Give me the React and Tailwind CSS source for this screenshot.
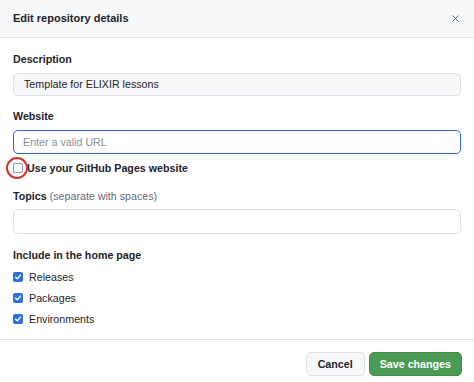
import { X } from 'lucide-react'

const Check = () => (
  <span className="flex h-[10px] w-[10px] items-center justify-center rounded-[2px] bg-[#2f6fe0]">
    <svg viewBox="0 0 10 10" className="h-[8px] w-[8px]">
      <path d="M2 5.2 L4.2 7.3 L8 2.6" fill="none" stroke="white" strokeWidth="1.8" strokeLinecap="round" strokeLinejoin="round" />
    </svg>
  </span>
)

const App = () => {
  const homeItems = ['Releases', 'Packages', 'Environments']

  return (
    <div className="h-[382px] w-[474px] bg-white text-[10.7px] text-[#1f2328]" style={{ fontFamily: '"Liberation Sans", Arial, sans-serif' }}>
      {/* Header */}
      <div className="flex h-[38px] items-center justify-between border-b border-[#e4e7ea] bg-[#f6f8fa] pl-[13px] pr-[13px]">
        <h1 className="text-[11px] font-bold">Edit repository details</h1>
        <X className="h-[11px] w-[11px] text-[#4d5660]" strokeWidth={2} />
      </div>

      {/* Body */}
      <div className="px-[13px] pt-[13px]">
        <label className="block font-bold leading-[16px]">Description</label>
        <div className="mt-[6px] flex h-[23px] items-center rounded-[5px] border border-[#dde1e5] bg-[#f6f8fa] px-[10px]">
          Template for ELIXIR lessons
        </div>

        <label className="mt-[12px] block font-bold leading-[16px]">Website</label>
        <div className="mt-[6px] flex h-[24px] items-center rounded-[5px] border-[1.5px] border-[#2c6ad6] px-[9px] text-[#8a9097]">
          Enter a valid URL
        </div>

        <div className="relative mt-[8px] flex h-[12px] items-center gap-[4px]">
          <span className="h-[10px] w-[10px] rounded-[2px] border border-[#8c959f] bg-white" />
          <span className="font-bold">Use your GitHub Pages website</span>
          <span className="absolute left-[-7px] top-[-5px] h-[22px] w-[22px] rounded-full border-2 border-[#d8322b]" />
        </div>

        <div className="mt-[14px] leading-[16px]">
          <span className="font-bold">Topics</span> <span className="text-[#636c76]">(separate with spaces)</span>
        </div>
        <div className="mt-[5px] h-[25px] rounded-[5px] border border-[#dde1e5] bg-white" />

        <div className="mt-[13px] font-bold leading-[16px]">Include in the home page</div>
        <div className="mt-[7px] flex flex-col gap-[7px]">
          {homeItems.map((item) => (
            <div key={item} className="flex h-[14px] items-center gap-[6px]">
              <Check />
              <span>{item}</span>
            </div>
          ))}
        </div>
      </div>

      {/* Footer */}
      <div className="mt-[13px] flex justify-end gap-[4px] border-t border-[#dfe2e5] px-[12px] pt-[12px]">
        <button className="h-[24px] rounded-[5px] border border-[#dde1e5] bg-[#f6f8fa] px-[11px] font-bold">Cancel</button>
        <button className="h-[24px] rounded-[5px] border border-[#3f8f4a] bg-[#4b9b55] px-[10px] font-bold text-white">Save changes</button>
      </div>
    </div>
  )
}

export default App
